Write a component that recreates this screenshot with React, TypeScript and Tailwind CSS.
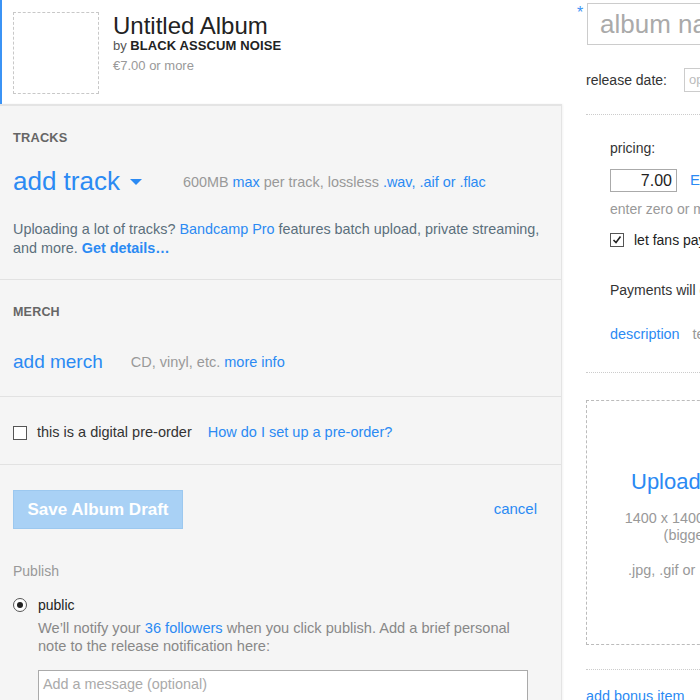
import React from "react";

const blue = "text-[#2b8af3]";

export default function App() {
  return (
    <div
      className="w-[700px] h-[700px] overflow-hidden bg-white flex text-[#333]"
      style={{ fontFamily: '"Liberation Sans", Arial, sans-serif' }}
    >
      {/* Left column */}
      <div className="w-[562px] shrink-0 flex flex-col">
        {/* Header */}
        <div className="h-[104px] shrink-0 bg-white border-l-2 border-[#3b93f5] flex pl-[11px] pt-[12px]">
          <div className="w-[86px] h-[82px] border border-dashed border-[#c8c8c8]" />
          <div className="ml-[14px]">
            <div className="text-[24px] leading-[28px] text-[#222]">Untitled Album</div>
            <div className="text-[13px] leading-[16px] text-[#555] mt-[-2px]">
              by <span className="font-bold text-[#222] tracking-[0.1px]">BLACK ASSCUM NOISE</span>
            </div>
            <div className="text-[13px] leading-[16px] text-[#999] mt-[4px]">€7.00 or more</div>
          </div>
        </div>
        {/* Gray panel */}
        <div className="flex-1 bg-[#f5f5f5] border-t-2 border-r border-[#e4e4e4] shadow-[1px_0_2px_rgba(0,0,0,0.05)]">
          {/* Tracks */}
          <div className="px-[13px] pt-[25px] pb-[21px] border-b border-[#e2e2e2]">
            <div className="text-[12.8px] leading-[14px] font-bold text-[#666] tracking-[0.2px]">TRACKS</div>
            <div className="flex items-center mt-[21px] h-[30px]">
              <span className={`text-[26px] leading-[30px] ${blue}`}>add track</span>
              <svg width="12" height="6" viewBox="0 0 12 6" className="ml-[10px] mt-[2px]">
                <path d="M0 0 L12 0 L6 6 Z" fill="#2b8af3" />
              </svg>
              <span className="ml-[41px] mt-[4px] text-[14.4px] text-[#999]">
                600MB <span className={blue}>max</span> per track, lossless{" "}
                <span className={blue}>.wav, .aif or .flac</span>
              </span>
            </div>
            <div className="mt-[24px] text-[14.4px] leading-[19px] text-[#5b6f7c]">
              Uploading a lot of tracks? <span className={blue}>Bandcamp Pro</span> features batch upload, private
              streaming, and more. <span className={`font-bold ${blue}`}>Get details…</span>
            </div>
          </div>
          {/* Merch */}
          <div className="px-[13px] pt-[25px] pb-[22px] border-b border-[#e2e2e2]">
            <div className="text-[12.5px] leading-[14px] font-bold text-[#666] tracking-[0.2px]">MERCH</div>
            <div className="flex items-center mt-[31px] h-[24px]">
              <span className={`text-[19px] leading-[24px] ${blue}`}>add merch</span>
              <span className="ml-[28px] mt-[2px] text-[14.5px] text-[#999]">
                CD, vinyl, etc. <span className={blue}>more info</span>
              </span>
            </div>
          </div>
          {/* Pre-order */}
          <div className="px-[13px] border-b border-[#e2e2e2] flex items-center h-[68px] pt-[4px]">
            <span className="w-[14px] h-[14px] border border-[#555] bg-white shrink-0" />
            <span className="ml-[10px] text-[14.5px] text-[#333]">this is a digital pre-order</span>
            <span className={`ml-[16px] text-[14.5px] ${blue}`}>How do I set up a pre-order?</span>
          </div>
          {/* Save + publish */}
          <div className="px-[13px] pt-[25px]">
            <div className="flex items-center justify-between pr-[11px]">
              <div className="w-[170px] h-[39px] bg-[#a9d1f5] border border-[#9cc8ef] flex items-center justify-center text-white font-bold text-[17px]">
                Save Album Draft
              </div>
              <span className={`text-[15px] ${blue}`}>cancel</span>
            </div>
            <div className="mt-[33px] text-[14px] leading-[18px] text-[#999]">Publish</div>
            <div className="mt-[16px] flex items-center h-[18px]">
              <span className="w-[14px] h-[14px] rounded-full border border-[#555] bg-white flex items-center justify-center">
                <span className="w-[6px] h-[6px] rounded-full bg-[#222]" />
              </span>
              <span className="ml-[11px] text-[14px] text-[#222]">public</span>
            </div>
            <div className="ml-[25px] mt-[5px] w-[490px] text-[14.6px] leading-[18px] text-[#888]">
              We’ll notify your <span className={blue}>36 followers</span> when you click publish. Add a brief personal
              note to the release notification here:
            </div>
            <div className="ml-[25px] mt-[15px] w-[490px] h-[60px] bg-white border border-[#aaa] px-[4px] pt-[3px] text-[14.4px] text-[#aaa]">
              Add a message (optional)
            </div>
          </div>
        </div>
      </div>

      {/* Right column */}
      <div className="w-[284px] shrink-0 pl-[24px]">
        <div className="relative mt-[3px] ml-[1px]">
          <span className="absolute left-[-10px] top-[-2px] text-[16px] text-[#3b93f5]">*</span>
          <div className="h-[42px] border border-[#ccc] flex items-center pl-[12px] text-[26px] text-[#aaa] whitespace-nowrap">
            album name
          </div>
        </div>
        <div className="mt-[23px] flex items-center h-[24px]">
          <span className="text-[14px] text-[#333]">release date:</span>
          <div className="ml-[17px] h-[24px] flex-1 border border-[#ccc] flex items-center pl-[4px] text-[13px] text-[#bbb]">
            optional
          </div>
        </div>
        <div className="mt-[22px] border-t border-dotted border-[#ccc]" />
        <div className="pl-[24px]">
          <div className="mt-[24px] text-[14px] leading-[18px] text-[#333]">pricing:</div>
          <div className="mt-[12px] flex items-center">
            <div className="w-[67px] h-[23px] border border-[#aaa] bg-white flex items-center justify-end pr-[4px] text-[16px] text-[#222]">
              7.00
            </div>
            <span className={`ml-[13px] text-[15px] ${blue}`}>EUR</span>
          </div>
          <div className="mt-[8px] text-[14px] leading-[18px] text-[#999] whitespace-nowrap">enter zero or more</div>
          <div className="mt-[13px] flex items-center h-[18px]">
            <span className="w-[14px] h-[14px] border border-[#555] bg-white flex items-center justify-center">
              <svg width="10" height="10" viewBox="0 0 10 10">
                <path d="M1.5 5 L4 7.5 L8.5 1.5" stroke="#222" strokeWidth="1.6" fill="none" />
              </svg>
            </span>
            <span className="ml-[10px] text-[14px] text-[#222] whitespace-nowrap">let fans pay more if they want</span>
          </div>
          <div className="mt-[32px] text-[14px] leading-[18px] text-[#333] whitespace-nowrap">Payments will go to</div>
          <div className="mt-[26px] flex text-[14.4px] leading-[18px]">
            <span className={blue}>description</span>
            <span className="ml-[13px] text-[#999]">tech</span>
          </div>
        </div>
        <div className="mt-[29px] border-t border-dotted border-[#ccc]" />
        <div className="mt-[27px] h-[245px] border border-dashed border-[#bbb] flex flex-col items-center text-center">
          <div className={`mt-[68px] text-[22px] leading-[26px] ${blue} whitespace-nowrap`}>Upload Album Art</div>
          <div className="mt-[15px] text-[14.4px] leading-[17px] text-[#999] whitespace-nowrap">
            1400 x 1400 pixels minimum
            <br />
            (bigger is better)
          </div>
          <div className="mt-[18px] text-[14.4px] leading-[17px] text-[#999] whitespace-nowrap">.jpg, .gif or .png, 10MB max</div>
        </div>
        <div className="mt-[24px] border-t border-dotted border-[#ccc]" />
        <div className={`mt-[16px] text-[14.4px] ${blue}`}>add bonus item</div>
      </div>
    </div>
  );
}
